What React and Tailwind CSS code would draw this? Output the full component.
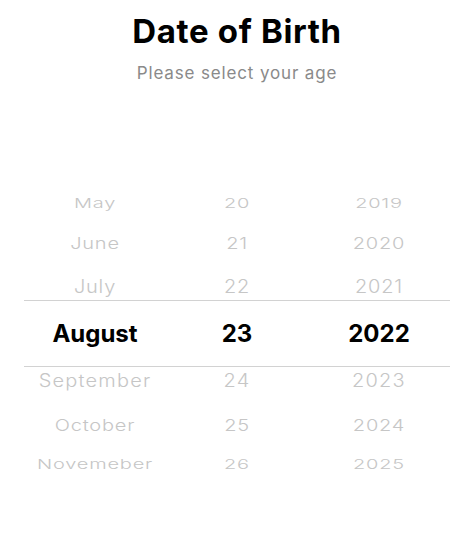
import React from "react";

const rowsTop = [
  { m: "May", d: "20", y: "2019", mt: "mt-[106px]", sy: "scale-y-[0.68]" },
  { m: "June", d: "21", y: "2020", mt: "mt-[16px]", sy: "scale-y-[0.8]" },
  { m: "July", d: "22", y: "2021", mt: "mt-[20px]", sy: "scale-y-[0.9]" },
];
const rowsBottom = [
  { m: "September", d: "24", y: "2023", mt: "mt-[2px]", sy: "scale-y-[0.9]", extra: "tracking-[0.06em]" },
  { m: "October", d: "25", y: "2024", mt: "mt-[20px]", sy: "scale-y-[0.8]" },
  { m: "Novemeber", d: "26", y: "2025", mt: "mt-[15px]", sy: "scale-y-[0.68]" },
];

function Row({ r }) {
  return (
    <div className={`grid grid-cols-3 h-6 leading-6 text-[20px] font-light text-[#c6c6c6] ${r.extra || "tracking-[0.04em]"} ${r.mt}`}>
      <div className={`text-center ${r.sy}`}>{r.m}</div>
      <div className={`text-center ${r.sy}`}>{r.d}</div>
      <div className={`text-center ${r.sy}`}>{r.y}</div>
    </div>
  );
}

export default function App() {
  return (
    <div className="w-[474px] h-[538px] bg-white font-['Inter','Liberation_Sans',sans-serif] text-black">
      <div className="pt-[11px] text-center">
        <h1 className="text-[33px] leading-[40px] font-bold tracking-[0.02em]">Date of Birth</h1>
        <p className="mt-[10px] text-[17px] leading-6 text-[#8a8a8a] tracking-[0.05em]">Please select your age</p>
      </div>
      <div className="px-6">
        {rowsTop.map((r) => (
          <Row key={r.m} r={r} />
        ))}
        <div className="mt-px grid grid-cols-3 h-[67px] border-y border-[#d2d2d2] items-center text-[24px] font-bold">
          <div className="text-center">August</div>
          <div className="text-center">23</div>
          <div className="text-center">2022</div>
        </div>
        {rowsBottom.map((r) => (
          <Row key={r.m} r={r} />
        ))}
      </div>
    </div>
  );
}
